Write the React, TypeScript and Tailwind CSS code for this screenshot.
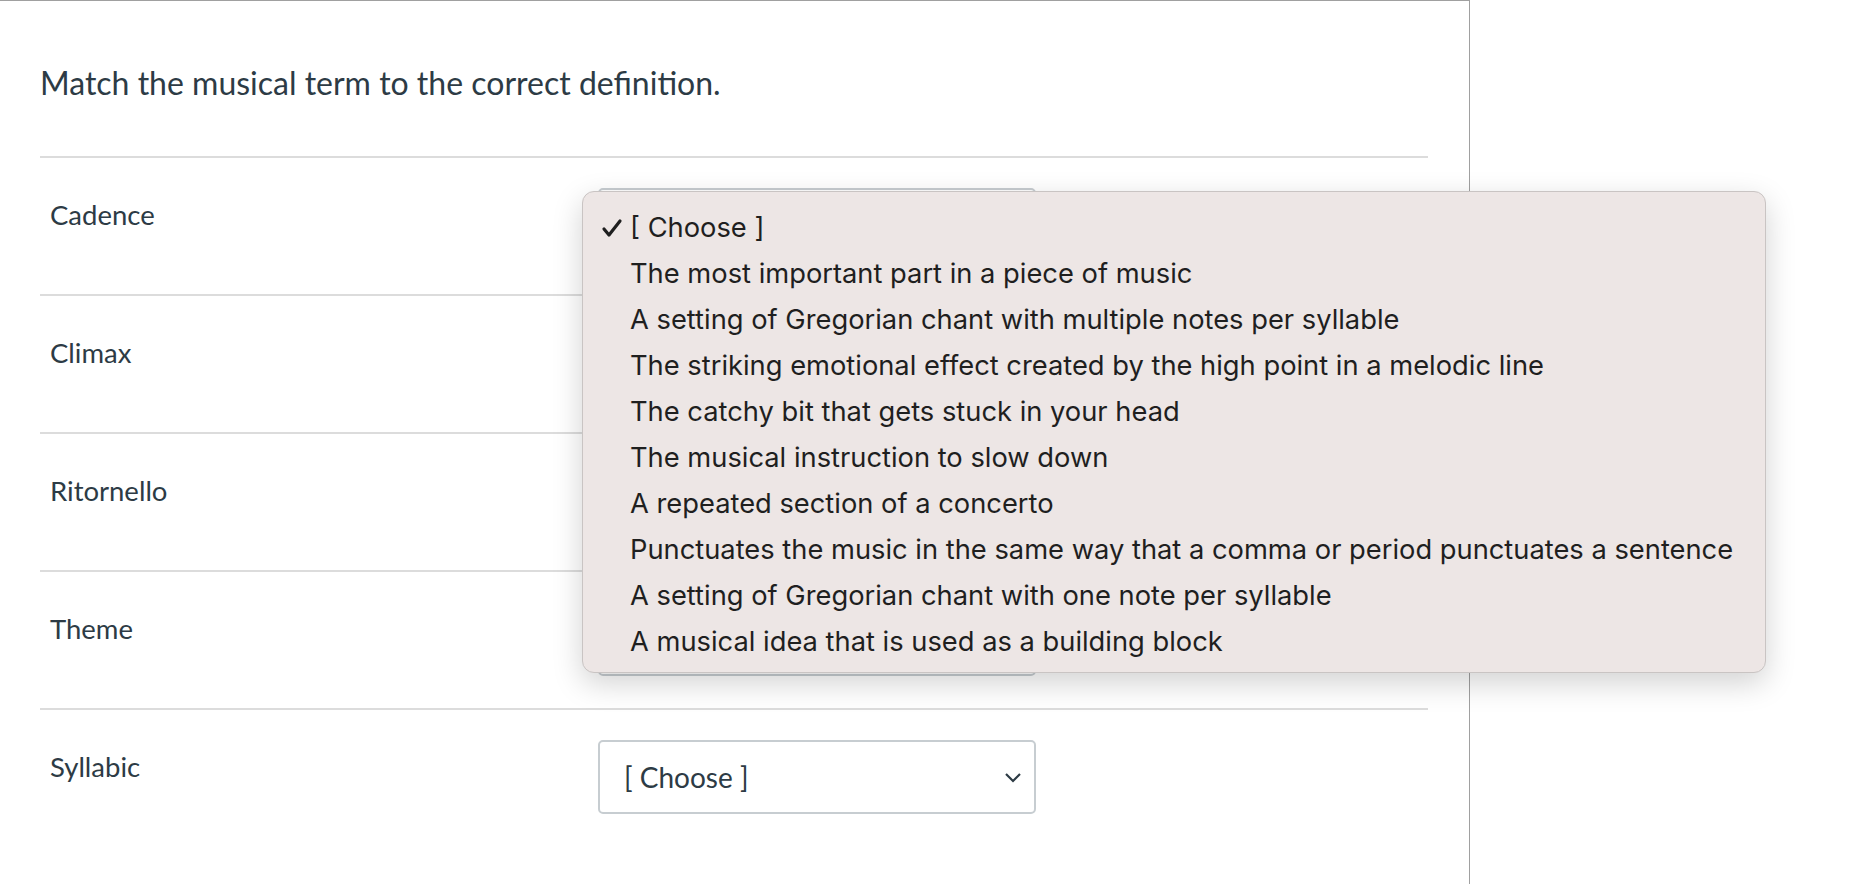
export default function App() {
  const rows = ["Cadence", "Climax", "Ritornello", "Theme", "Syllabic"];
  const opts = [
    "The most important part in a piece of music",
    "A setting of Gregorian chant with multiple notes per syllable",
    "The striking emotional effect created by the high point in a melodic line",
    "The catchy bit that gets stuck in your head",
    "The musical instruction to slow down",
    "A repeated section of a concerto",
    "Punctuates the music in the same way that a comma or period punctuates a sentence",
    "A setting of Gregorian chant with one note per syllable",
    "A musical idea that is used as a building block",
  ];
  return (
    <div className="relative w-[1850px] h-[884px] bg-white overflow-hidden" style={{ fontFamily: "Lato, sans-serif" }}>
      <div className="w-[1470px] h-[884px] border-t border-r border-[#a0a0a0] pl-[40px] pr-[41px] text-[#2d3b45]">
        <div className="h-[155px] flex items-center text-[32px] pt-[9px]">Match the musical term to the correct definition.</div>
        {rows.map((r) => (
          <div key={r} className="h-[138px] border-t-2 border-[#dcdcdc] flex">
            <div className="w-[558px] pl-[10px] pt-[37px] text-[27.5px] leading-[40px]">{r}</div>
            <div className="pt-[30px]">
              <div className="w-[438px] h-[74px] border-2 border-[#c7cdd1] rounded-[5px] flex items-center justify-between pl-[24px] pr-[12px] text-[28px] text-[#2d3b45]">
                <span>[ Choose ]</span>
                <svg width="18" height="12" viewBox="0 0 18 12" fill="none" stroke="#2d3b45" strokeWidth="2.2"><path d="M2 3l7 7 7-7" /></svg>
              </div>
            </div>
          </div>
        ))}
      </div>
      <div
        className="absolute left-[582px] top-[191px] w-[1184px] h-[482px] bg-[#ede6e5] border border-[#c9c4c3] rounded-[12px] shadow-[0_10px_30px_rgba(0,0,0,0.18)] pt-[13px] text-[#1f1f1f] text-[27.3px]"
        style={{ fontFamily: "Inter, 'Noto Sans', sans-serif" }}
      >
        <div className="h-[46px] flex items-center pl-[18px]">
          <svg width="22" height="20" viewBox="0 0 22 20" fill="none" stroke="#1f1f1f" strokeWidth="3.2" strokeLinecap="round" strokeLinejoin="round" className="mr-[7px]"><path d="M3 11l5 6L19 3" /></svg>
          <span>[ Choose ]</span>
        </div>
        {opts.map((o) => (
          <div key={o} className="h-[46px] flex items-center pl-[47px]">{o}</div>
        ))}
      </div>
    </div>
  );
}
